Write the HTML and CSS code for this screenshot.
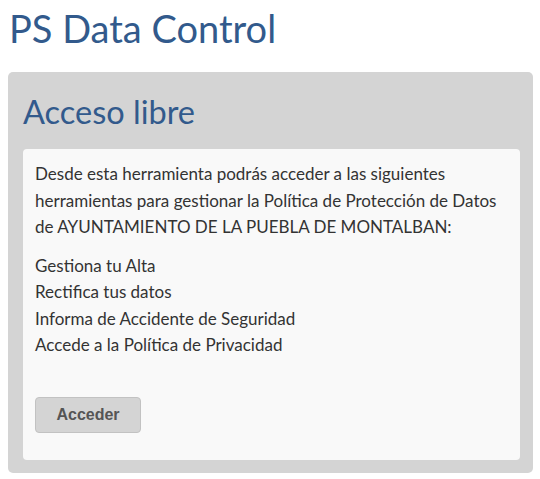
FILE: index.html
```html
<!DOCTYPE html>
<html lang="es">
<head>
<meta charset="utf-8">
<title>PS Data Control</title>
<link rel="stylesheet" href="styles.css">
</head>
<body>
<h1 class="title">PS Data Control</h1>
<section class="panel">
  <h2 class="panel-title">Acceso libre</h2>
  <div class="card">
    <p class="intro">Desde esta herramienta podrás acceder a las siguientes herramientas para gestionar la Política de Protección de Datos de AYUNTAMIENTO DE LA PUEBLA DE MONTALBAN:</p>
    <ul class="options">
      <li>Gestiona tu Alta</li>
      <li>Rectifica tus datos</li>
      <li>Informa de Accidente de Seguridad</li>
      <li>Accede a la Política de Privacidad</li>
    </ul>
    <button class="btn" type="button">Acceder</button>
  </div>
</section>
</body>
</html>
```
FILE: styles.css
```css
html, body {
  margin: 0;
  padding: 0;
  background: #ffffff;
}
body {
  padding: 0 7px 0 8px;
  font-family: Lato, "Open Sans", sans-serif;
  color: #333333;
}
.title {
  margin: 0;
  padding: 4px 0 0 1px;
  height: 72px;
  box-sizing: border-box;
  font-size: 38px;
  font-weight: 400;
  line-height: 48px;
  color: #325a8c;
}
.panel {
  background: #d4d4d4;
  border-radius: 5px;
  padding: 0 13px 13px 15px;
}
.panel-title {
  margin: 0;
  padding: 20px 0 0 0;
  height: 77px;
  box-sizing: border-box;
  font-size: 32.5px;
  font-weight: 400;
  line-height: 40px;
  color: #325a8c;
}
.card {
  background: #f9f9f9;
  border-radius: 4px;
  padding: 12px 8px 27px 12px;
}
.intro {
  margin: 0 0 12px 0;
  font-size: 17px;
  line-height: 26.5px;
}
.options {
  list-style: none;
  margin: 0 0 38px 0;
  padding: 0;
  font-size: 17px;
  line-height: 26.5px;
}
.btn {
  display: block;
  width: 106px;
  height: 36px;
  background: #d4d4d4;
  border: 1px solid #c2c2c2;
  border-radius: 4px;
  font-family: "Liberation Sans", Arial, sans-serif;
  font-weight: 700;
  font-size: 16px;
  color: #555555;
  padding: 0;
}
```
